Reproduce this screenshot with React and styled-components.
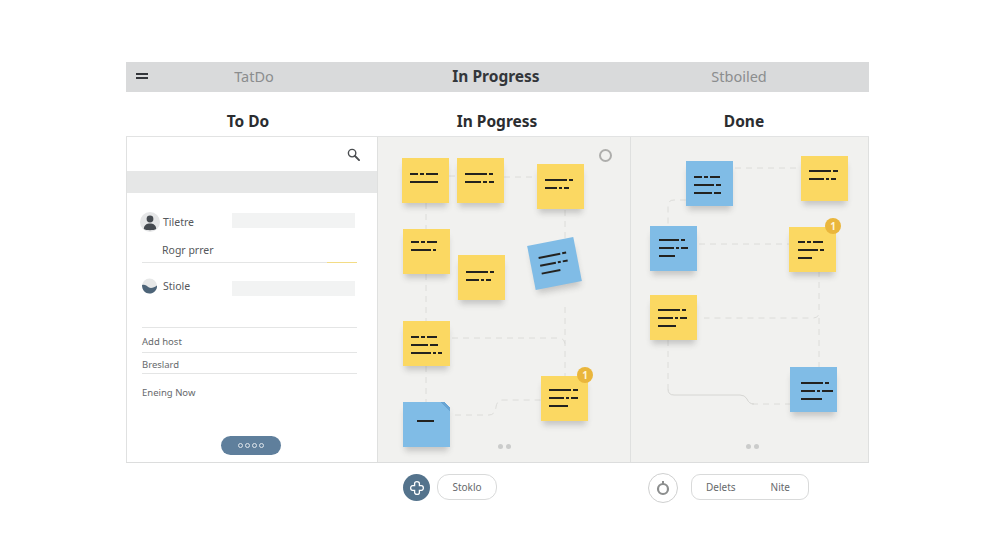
import React from "react";
import styled, { createGlobalStyle } from "styled-components";

const GlobalStyle = createGlobalStyle`
  html, body {
    margin: 0;
    padding: 0;
    background: #ffffff;
  }

  body {
    font-family: "Noto Sans", "Open Sans", sans-serif;
  }
`;

const YELLOW = "#fbd862";
const BLUE = "#80bce6";
const CANVAS = "#f1f1ef";

const progressNotes = [
  { id: 1, x: 25, y: 21, rows: [[8, 4, 12], [28]], top: 15 },
  { id: 2, x: 80, y: 21, rows: [[22, 4], [16, 4, 5]], top: 15 },
  { id: 3, x: 160, y: 27, rows: [[22, 4], [12, 3, 5]], top: 15 },
  { id: 4, x: 26, y: 92, rows: [[8, 4, 10], [20, 3]], top: 12 },
  { id: 5, x: 81, y: 118, rows: [[22, 4], [13, 3, 5]], top: 16 },
  { id: 6, x: 154, y: 104, rows: [[22, 4], [16, 3, 5], [19]], top: 13, blue: true, tilt: -11, left: 9 },
  { id: 7, x: 26, y: 184, rows: [[8, 4, 10], [17, 8], [20, 3, 4]], top: 15 },
  { id: 8, x: 164, y: 239, rows: [[22, 5], [15, 3, 7], [19]], top: 13, badge: "1", left: 8 },
  { id: 9, x: 26, y: 265, rows: [[17]], top: 18, blue: true, fold: true, left: 14 },
];

const doneNotes = [
  { id: 1, x: 56, y: 24, rows: [[8, 4, 10], [20, 5], [18, 7]], top: 15, blue: true },
  { id: 2, x: 171, y: 19, rows: [[22, 5], [15, 3, 5]], top: 14, left: 8 },
  { id: 3, x: 20, y: 89, rows: [[20, 4], [15, 3, 7], [16]], top: 13, blue: true, left: 9 },
  { id: 4, x: 159, y: 90, rows: [[7, 4, 10], [20, 4], [14]], top: 14, badge: "1", left: 9 },
  { id: 5, x: 20, y: 158, rows: [[22, 4], [15, 3, 7], [18]], top: 14, left: 8 },
  { id: 6, x: 160, y: 230, rows: [[22, 4], [14, 3, 11], [21]], top: 15, blue: true, left: 11 },
];

const Note = ({ note }) => (
  <Sticky $x={note.x} $y={note.y} $blue={note.blue} $tilt={note.tilt} $top={note.top} $left={note.left} $fold={note.fold}>
    {note.rows.map((row, i) => (
      <DashRow key={i}>
        {row.map((width, j) => (
          <Dash key={j} $width={width} />
        ))}
      </DashRow>
    ))}
    {note.badge && <Badge>{note.badge}</Badge>}
  </Sticky>
);

const App = () => {
  return (
    <Page>
      <GlobalStyle />
      <Board>
        <TopBar>
          <Burger>
            <span />
            <span />
          </Burger>
          <TabLabel>TatDo</TabLabel>
          <TabLabel $active>In Progress</TabLabel>
          <TabLabel>Stboiled</TabLabel>
        </TopBar>

        <TitleRow>
          <ColumnTitle>To Do</ColumnTitle>
          <ColumnTitle>In Pogress</ColumnTitle>
          <ColumnTitle>Done</ColumnTitle>
        </TitleRow>

        <Columns>
          <SidePanel>
            <SearchRow>
              <svg width="13" height="13" viewBox="0 0 14 14" fill="none" stroke="#4a4d50">
                <circle cx="5.5" cy="5.5" r="4" strokeWidth="1.5" />
                <path d="M8.6 8.6 L13 13" strokeWidth="2" strokeLinecap="round" />
              </svg>
            </SearchRow>
            <GreyBand />
            <FormRow $top={19}>
              <Avatar>
                <svg width="20" height="20" viewBox="0 0 20 20">
                  <circle cx="10" cy="10" r="10" fill="#e5e6e7" />
                  <circle cx="10" cy="7" r="3.4" fill="#454a50" />
                  <path d="M3.8 17 C4 12.6 7 11.4 10 11.4 C13 11.4 16 12.6 16.2 17 C14 18.6 6 18.6 3.8 17 Z" fill="#454a50" />
                </svg>
              </Avatar>
              <RowLabel>Tiletre</RowLabel>
              <Placeholder $nudge={-3} />
            </FormRow>
            <SubLabel>Rogr prrer</SubLabel>
            <Rule $top={4}>
              <Highlight />
            </Rule>
            <FormRow $top={13}>
              <Avatar>
                <svg width="20" height="20" viewBox="0 0 20 20">
                  <circle cx="9.5" cy="10" r="7.5" fill="#e7e8e8" />
                  <path d="M2 9 C4.5 8 6.5 9.4 9 11.6 C11.5 12.6 14.5 11.4 17 9.4 C17.4 14 13.6 17.5 9.5 17.5 C5.4 17.5 2 14 2 9 Z" fill="#4d6478" />
                </svg>
              </Avatar>
              <RowLabel>Stiole</RowLabel>
              <Placeholder $nudge={4} />
            </FormRow>
            <Rule $top={31} />
            <ListItem $height={24} $line={28}>Add host</ListItem>
            <Rule />
            <ListItem $height={20} $line={24}>Breslard</ListItem>
            <Rule />
            <ListItem $height={38} $line={38}>Eneing Now</ListItem>
            <PillWrap>
              <Pill>
                <i />
                <i />
                <i />
                <i />
              </Pill>
            </PillWrap>
          </SidePanel>

          <Canvas>
            <Wires viewBox="0 0 253 325" width="253" height="325" fill="none">
              <g stroke="#dcdcd9" strokeWidth="1" strokeDasharray="6 5">
                <path d="M72 39 H80" />
                <path d="M127 40 H160" />
                <path d="M49 66 V92" />
                <path d="M188 73 V103" />
                <path d="M49 137 V184" />
                <path d="M188 170 V239" />
                <path d="M75 201 H181 Q188 201 188 208" />
                <path d="M49 229 V265" />
                <path d="M78 278 H112 Q118 278 119 270 Q120 263 126 263 H164" />
              </g>
            </Wires>
            {progressNotes.map((note) => (
              <Note key={note.id} note={note} />
            ))}
            <Ring />
            <PagerDots $shift={-6}>
              <span />
              <span />
            </PagerDots>
          </Canvas>

          <Canvas $last>
            <Wires viewBox="0 0 239 325" width="239" height="325" fill="none">
              <g stroke="#dcdcd9" strokeWidth="1" strokeDasharray="6 5">
                <path d="M105 31 H171" />
                <path d="M56 63 H44 Q38 63 38 69 V89" />
                <path d="M69 107 H159" />
                <path d="M189 134 V175 Q189 181 183 181 H74" />
                <path d="M189 181 V230" />
                <path d="M38 203 V252" />
                <path d="M122 267 H160" />
              </g>
              <path d="M38 252 Q38 258 44 258 H110 Q115 258 117 262 Q119 267 124 267" stroke="#d6d6d3" strokeWidth="1" />
            </Wires>
            {doneNotes.map((note) => (
              <Note key={note.id} note={note} />
            ))}
            <PagerDots $shift={-4}>
              <span />
              <span />
            </PagerDots>
          </Canvas>
        </Columns>

        <Footer>
          <div />
          <FooterCell $left={26} $gap={7} $top={11}>
            <RoundAction>
              <svg width="16" height="16" viewBox="0 0 16 16" fill="none" stroke="#ffffff" strokeWidth="1.3">
                <path d="M5.6 5.6 V3.6 C5.6 1 10.4 1 10.4 3.6 V5.6 H12.4 C15 5.6 15 10.4 12.4 10.4 H10.4 V12.4 C10.4 15 5.6 15 5.6 12.4 V10.4 H3.6 C1 10.4 1 5.6 3.6 5.6 Z" />
              </svg>
            </RoundAction>
            <OutlineButton $width={60}>Stoklo</OutlineButton>
          </FooterCell>
          <FooterCell $left={18} $gap={13} $top={11}>
            <GhostAction>
              <svg width="14" height="16" viewBox="0 0 14 16" fill="none">
                <circle cx="7" cy="9" r="5" stroke="#8c8e8e" strokeWidth="2.2" />
                <path d="M7 1 V4" stroke="#8c8e8e" strokeWidth="2" />
              </svg>
            </GhostAction>
            <OutlineButton $width={118} $split>
              <span>Delets</span>
              <span>Nite</span>
            </OutlineButton>
          </FooterCell>
        </Footer>
      </Board>
    </Page>
  );
};

const Page = styled.div`
  width: 992px;
  height: 541px;
  padding: 62px 0 0 126px;
  box-sizing: border-box;
  overflow: hidden;
  background: #ffffff;
`;

const Board = styled.div`
  display: flex;
  flex-direction: column;
  width: 743px;
`;

const threeColumns = `
  display: grid;
  grid-template-columns: 251px 253px 239px;
`;

const TopBar = styled.div`
  position: relative;
  display: grid;
  grid-template-columns: 256px 228px 258px;
  align-items: center;
  height: 30px;
  padding-bottom: 3px;
  box-sizing: border-box;
  background: #d9dadb;
`;

const Burger = styled.div`
  position: absolute;
  left: 10px;
  top: 11px;
  display: flex;
  flex-direction: column;
  gap: 2px;

  span {
    display: block;
    width: 12px;
    height: 2px;
    background: #33363a;
  }
`;

const TabLabel = styled.span`
  font-size: ${(p) => (p.$active ? "15.5px" : "14.5px")};
  font-weight: ${(p) => (p.$active ? 700 : 400)};
  color: ${(p) => (p.$active ? "#33363a" : "#8b8d8e")};
  text-align: center;
`;

const TitleRow = styled.div`
  display: grid;
  grid-template-columns: 244px 254px 240px;
  height: 45px;
  box-sizing: border-box;
  padding-top: 16px;
  border-bottom: 1px solid #e2e3e3;
`;

const ColumnTitle = styled.h2`
  margin: 0;
  font-size: 15.5px;
  line-height: 26px;
  font-weight: 700;
  text-align: center;
  color: #2b2d30;
`;

const Columns = styled.div`
  ${threeColumns}
  height: 325px;
  border-bottom: 1px solid #dcdddd;
`;

const SidePanel = styled.div`
  display: flex;
  flex-direction: column;
  box-sizing: border-box;
  border-left: 1px solid #e0e1e1;
`;

const SearchRow = styled.div`
  display: flex;
  align-items: center;
  justify-content: flex-end;
  height: 34px;
  padding-right: 17px;
`;

const GreyBand = styled.div`
  height: 22px;
  background: #e6e7e7;
`;

const FormRow = styled.div`
  display: flex;
  align-items: center;
  height: 20px;
  margin-top: ${(p) => p.$top}px;
  padding: 0 22px 0 13px;
`;

const Avatar = styled.div`
  display: flex;
  width: 20px;
  height: 20px;
  flex: none;
`;

const RowLabel = styled.span`
  margin-left: 3px;
  font-size: 10.5px;
  color: #55585b;
  flex: 1;
`;

const Placeholder = styled.div`
  width: 123px;
  height: 15px;
  margin-top: ${(p) => p.$nudge}px;
  background: #f2f3f3;
`;

const SubLabel = styled.div`
  height: 16px;
  margin-top: 10px;
  padding-left: 35px;
  font-size: 10.5px;
  line-height: 16px;
  color: #55585b;
`;

const Rule = styled.div`
  position: relative;
  height: 1px;
  margin: ${(p) => p.$top || 0}px 20px 0 15px;
  background: #e4e5e5;
  flex: none;
`;

const Highlight = styled.div`
  position: absolute;
  right: 0;
  top: 0;
  width: 30px;
  height: 1px;
  background: #f3dc85;
`;

const ListItem = styled.div`
  height: ${(p) => p.$height}px;
  padding-left: 15px;
  font-size: 9.5px;
  line-height: ${(p) => p.$line}px;
  color: #66696c;
  flex: none;
`;

const PillWrap = styled.div`
  display: flex;
  justify-content: center;
  margin-top: 24px;
  padding-right: 3px;
`;

const Pill = styled.div`
  display: flex;
  align-items: center;
  justify-content: center;
  gap: 2px;
  width: 60px;
  height: 19px;
  border-radius: 10px;
  background: #5f7f9c;

  i {
    width: 3px;
    height: 3px;
    border: 1px solid #dfe6ec;
    border-radius: 50%;
  }
`;

const Canvas = styled.div`
  position: relative;
  background: ${CANVAS};
  border-left: 1px solid #dfe0df;
  ${(p) => p.$last && "border-right: 1px solid #dfe0df;"}
  box-sizing: border-box;
`;

const Wires = styled.svg`
  position: absolute;
  left: -1px;
  top: 0;
`;

const Sticky = styled.div`
  position: absolute;
  left: ${(p) => p.$x - 1}px;
  top: ${(p) => p.$y}px;
  box-sizing: border-box;
  display: flex;
  flex-direction: column;
  gap: 6px;
  width: 47px;
  height: 45px;
  padding: ${(p) => p.$top}px 0 0 ${(p) => p.$left || 8}px;
  background: ${(p) => (p.$blue ? BLUE : YELLOW)};
  box-shadow: 0 6px 6px -2px rgba(60, 60, 60, 0.24);
  transform: rotate(${(p) => p.$tilt || 0}deg);
  ${(p) =>
    p.$fold &&
    `background: linear-gradient(225deg, ${CANVAS} 4px, #69a5d4 4px, #69a5d4 7px, ${BLUE} 7px);`}
`;

const DashRow = styled.div`
  display: flex;
  gap: 2px;
  height: 2px;
`;

const Dash = styled.span`
  display: block;
  width: ${(p) => p.$width}px;
  height: 2px;
  background: #23221f;
`;

const Badge = styled.span`
  position: absolute;
  right: -5px;
  top: -9px;
  width: 16px;
  height: 16px;
  border-radius: 50%;
  background: #eab63c;
  color: #fff5d8;
  font-size: 10px;
  font-weight: 700;
  line-height: 16px;
  text-align: center;
`;

const Ring = styled.span`
  position: absolute;
  left: 221px;
  top: 12px;
  box-sizing: border-box;
  width: 13px;
  height: 13px;
  border: 2px solid #aeaeac;
  border-radius: 50%;
`;

const PagerDots = styled.div`
  position: absolute;
  left: 50%;
  bottom: 13px;
  display: flex;
  gap: 3px;
  transform: translateX(${(p) => p.$shift}px);

  span {
    width: 5px;
    height: 5px;
    border-radius: 50%;
    background: #cbcccb;
  }
`;

const Footer = styled.div`
  ${threeColumns}
  height: 48px;
`;

const FooterCell = styled.div`
  display: flex;
  align-items: flex-start;
  gap: ${(p) => p.$gap}px;
  padding: ${(p) => p.$top}px 0 0 ${(p) => p.$left}px;
`;

const RoundAction = styled.div`
  display: flex;
  align-items: center;
  justify-content: center;
  width: 27px;
  height: 27px;
  border-radius: 50%;
  background: #54738c;
`;

const GhostAction = styled.div`
  display: flex;
  align-items: center;
  justify-content: center;
  box-sizing: border-box;
  width: 30px;
  height: 30px;
  margin-top: -1px;
  border: 1px solid #cfd0d0;
  border-radius: 50%;
  background: #ffffff;
`;

const OutlineButton = styled.div`
  display: flex;
  align-items: center;
  justify-content: ${(p) => (p.$split ? "space-between" : "center")};
  box-sizing: border-box;
  width: ${(p) => p.$width}px;
  height: 26px;
  padding: ${(p) => (p.$split ? "0 18px 0 14px" : "0")};
  border: 1px solid #d9dada;
  border-radius: ${(p) => (p.$split ? "9px" : "12px")};
  font-size: 10px;
  color: #66696c;
`;

export default App;
